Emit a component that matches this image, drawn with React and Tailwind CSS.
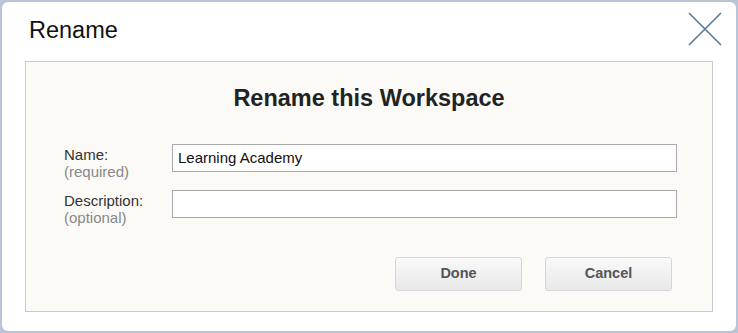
export default function App() {
  return (
    <div className="w-[738px] h-[333px] bg-[#b9c5d6] p-[2px] pr-[2px]" style={{ fontFamily: '"Liberation Sans", Arial, sans-serif' }}>
      <div className="w-full h-full bg-white rounded-[6px] flex flex-col relative">
        <div className="h-[59px] flex items-start pl-[27px] pt-[14px]">
          <span className="text-[23.5px] leading-[28px] text-[#111]">Rename</span>
        </div>
        <button className="absolute right-[14px] top-[10px] w-[34px] h-[34px]">
          <svg width="34" height="34" viewBox="0 0 34 34">
            <path d="M1 1 L33 33 M33 1 L1 33" stroke="#5b7893" strokeWidth="1.6" fill="none" />
          </svg>
        </button>
        <div className="ml-[23px] mr-[23px] h-[251px] border border-[#c9c9c9] bg-[#fbfaf7] flex flex-col">
          <h1 className="text-center text-[23.5px] leading-[28px] font-bold text-[#222] mt-[22px]">Rename this Workspace</h1>
          <div className="flex mt-[32px] pl-[38px] pr-[35px]">
            <div className="w-[108px] flex flex-col text-[15px] leading-[17px] pt-[2px]">
              <span className="text-[#333]">Name:</span>
              <span className="text-[#888]">(required)</span>
            </div>
            <div className="flex-1 h-[28px] border border-[#aaa] bg-white flex items-center px-[5px] text-[15px] text-[#111]">Learning Academy</div>
          </div>
          <div className="flex mt-[10px] pl-[38px] pr-[35px]">
            <div className="w-[108px] flex flex-col text-[15px] leading-[17px] pt-[2px]">
              <span className="text-[#333]">Description:</span>
              <span className="text-[#888]">(optional)</span>
            </div>
            <div className="flex-1 h-[28px] border border-[#aaa] bg-white"></div>
          </div>
          <div className="flex justify-end gap-[23px] mt-[31px] pr-[40px]">
            <button className="w-[127px] h-[34px] rounded-[3px] border border-[#d6d6d6] bg-gradient-to-b from-[#f9f9f9] to-[#e9e9e9] text-[14.5px] font-bold text-[#555]">Done</button>
            <button className="w-[127px] h-[34px] rounded-[3px] border border-[#d6d6d6] bg-gradient-to-b from-[#f9f9f9] to-[#e9e9e9] text-[14.5px] font-bold text-[#555]">Cancel</button>
          </div>
        </div>
      </div>
    </div>
  );
}
